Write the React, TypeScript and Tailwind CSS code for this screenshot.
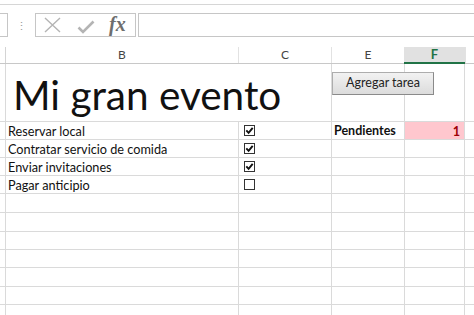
import React from "react";

const gridLine = "border-[#dadada]";

const rows: { h: string; b?: string; checked?: boolean; e?: string; f?: string }[] = [
  { h: "h-[18px]", b: "Reservar local", checked: true, e: "Pendientes", f: "1" },
  { h: "h-[18px]", b: "Contratar servicio de comida", checked: true },
  { h: "h-[18px]", b: "Enviar invitaciones", checked: true },
  { h: "h-[18px]", b: "Pagar anticipio", checked: false },
  { h: "h-[19px]" },
  { h: "h-[19px]" },
  { h: "h-[18px]" },
  { h: "h-[18px]" },
  { h: "h-[19px]" },
  { h: "h-[18px]" },
  { h: "h-[18px]" },
];

function CheckBox({ checked }: { checked: boolean }) {
  return (
    <span className="w-[11px] h-[11px] border border-[#333] bg-white flex items-center justify-center">
      {checked && (
        <svg width="9" height="9" viewBox="0 0 9 9">
          <path d="M1.3 4.4 L3.6 6.9 L7.7 1.8" fill="none" stroke="#111" strokeWidth="1.9" />
        </svg>
      )}
    </span>
  );
}

export default function App() {
  return (
    <div className="w-[474px] h-[315px] overflow-hidden bg-white font-['Lato','Open_Sans',sans-serif] text-[#111]">
      {/* ribbon edge */}
      <div className="h-[5px] border-b border-[#d6d6d6]" />

      {/* formula bar */}
      <div className="flex items-center mt-[8px] h-[24px]">
        <div className="w-[8px] h-full border border-l-0 border-[#c6c6c6]" />
        <div className="w-[27px] flex justify-center text-[#9a9a9a] text-[11px] leading-none">⋮</div>
        <div className="w-[101px] h-full border border-[#c6c6c6] flex items-center">
          <svg width="17" height="16" viewBox="0 0 17 16" className="ml-[8px]">
            <path d="M1 1 L16 15 M16 1 L1 15" stroke="#b4b4b4" strokeWidth="1.4" fill="none" />
          </svg>
          <svg width="18" height="14" viewBox="0 0 18 14" className="ml-[16px] mt-[3px]">
            <path d="M1.5 7.5 L6 12 L16.5 1.5" stroke="#b4b4b4" strokeWidth="2.6" fill="none" />
          </svg>
          <span className="ml-[14px] font-['Liberation_Serif',serif] italic font-bold text-[20px] leading-none text-[#6e6e6e] mb-[2px]">
            fx
          </span>
        </div>
        <div className="ml-[2px] flex-1 h-full border border-r-0 border-[#c6c6c6]" />
      </div>

      {/* column headers */}
      <div className="flex mt-[10px] h-[17px] border-b border-[#c8c8c8] text-[12px] text-[#444] leading-none">
        <div className="w-[6px] border-r border-[#d4d4d4]" />
        <div className="w-[233px] border-r border-[#e2e2e2] flex items-center justify-center">B</div>
        <div className="w-[93px] border-r border-[#e2e2e2] flex items-center justify-center">C</div>
        <div className="w-[72px] flex items-center justify-center">E</div>
        <div className="w-[61px] bg-[#e1e1e1] border-b-2 border-[#217346] -mb-px flex items-center justify-center font-bold text-[#217346] text-[13px]">
          F
        </div>
        <div className="flex-1 border-l border-[#e2e2e2]" />
      </div>

      {/* title row */}
      <div className={`flex h-[58px] border-b ${gridLine}`}>
        <div className={`w-[6px] border-r ${gridLine}`} />
        <div className="w-[233px] flex items-end pl-[7px] pb-[6px] text-[40.5px] leading-none whitespace-nowrap z-10">
          Mi gran evento
        </div>
        <div className={`w-[93px] border-r ${gridLine}`} />
        <div className={`w-[73px] border-r ${gridLine} relative`}>
          <button className="absolute left-0 top-[8px] w-[102px] h-[23px] z-10 border border-[#adadad] border-r-[#8a8a8a] border-b-[#8a8a8a] bg-gradient-to-b from-[#f2f2f2] to-[#dcdcdc] text-[12.5px] text-[#222] flex items-center justify-center">
            Agregar tarea
          </button>
        </div>
        <div className={`w-[60px] border-r ${gridLine}`} />
        <div className="flex-1" />
      </div>

      {/* data rows */}
      {rows.map((r, i) => (
        <div key={i} className={`flex ${r.h} border-b ${gridLine} text-[12.7px] leading-none`}>
          <div className={`w-[6px] border-r ${gridLine}`} />
          <div className={`w-[233px] border-r ${gridLine} flex items-center pl-[2px] pt-px whitespace-nowrap`}>{r.b}</div>
          <div className={`w-[93px] border-r ${gridLine} flex items-center pl-[5px]`}>
            {r.checked !== undefined && <CheckBox checked={r.checked} />}
          </div>
          <div className={`w-[73px] border-r ${gridLine} flex items-center pl-[2px] pt-px font-bold text-[12.5px] whitespace-nowrap`}>
            {r.e}
          </div>
          <div
            className={`w-[60px] border-r ${gridLine} flex items-center justify-end pr-[4px] pt-px font-bold ${
              r.f ? "bg-[#ffc7ce] text-[#9c0006]" : ""
            }`}
          >
            {r.f}
          </div>
          <div className="flex-1" />
        </div>
      ))}
    </div>
  );
}
